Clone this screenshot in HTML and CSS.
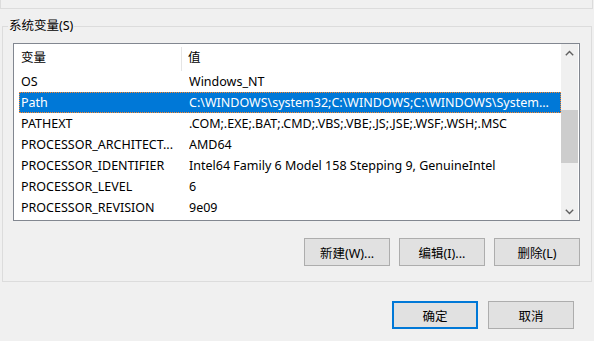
FILE: index.html
```html
<!DOCTYPE html>
<html lang="zh-CN">
<head>
<meta charset="utf-8">
<title>系统变量</title>
<link rel="stylesheet" href="styles.css">
</head>
<body>
<div class="prev"></div>
<div class="group">
  <span class="legend">系统变量(S)</span>
  <div class="list">
    <div class="rows">
      <div class="hdr"><div class="c1">变量</div><div class="c2">值</div></div>
      <div class="row"><div class="c1">OS</div><div class="c2">Windows_NT</div></div>
      <div class="row sel"><div class="c1">Path</div><div class="c2">C:\WINDOWS\system32;C:\WINDOWS;C:\WINDOWS\System...</div></div>
      <div class="row"><div class="c1">PATHEXT</div><div class="c2">.COM;.EXE;.BAT;.CMD;.VBS;.VBE;.JS;.JSE;.WSF;.WSH;.MSC</div></div>
      <div class="row"><div class="c1">PROCESSOR_ARCHITECT...</div><div class="c2">AMD64</div></div>
      <div class="row"><div class="c1">PROCESSOR_IDENTIFIER</div><div class="c2">Intel64 Family 6 Model 158 Stepping 9, GenuineIntel</div></div>
      <div class="row"><div class="c1">PROCESSOR_LEVEL</div><div class="c2">6</div></div>
      <div class="row"><div class="c1">PROCESSOR_REVISION</div><div class="c2">9e09</div></div>
    </div>
    <div class="sb">
      <div class="sb-btn"><svg width="9" height="6" viewBox="0 0 9 6"><path d="M0.8 5.2 L4.5 1.5 L8.2 5.2" fill="none" stroke="#606060" stroke-width="1.4"/></svg></div>
      <div class="track"><div class="thumb"></div></div>
      <div class="sb-btn"><svg width="9" height="6" viewBox="0 0 9 6"><path d="M0.8 0.8 L4.5 4.5 L8.2 0.8" fill="none" stroke="#606060" stroke-width="1.4"/></svg></div>
    </div>
  </div>
  <div class="btns">
    <div class="btn">新建(W)...</div>
    <div class="btn">编辑(I)...</div>
    <div class="btn">删除(L)</div>
  </div>
</div>
<div class="footer">
  <div class="btn primary">确定</div>
  <div class="btn">取消</div>
</div>
</body>
</html>
```
FILE: styles.css
```css
html, body {
  margin: 0;
  background: #f0f0f0;
  color: #000;
  font-family: "Noto Sans", "Noto Sans CJK SC", sans-serif;
  font-size: 12.5px;
}

.prev {
  height: 8px;
  margin-right: 1px;
  border: 1px solid #dcdcdc;
  border-top: 0;
}

.group {
  position: relative;
  margin: 17px 2px 0 2px;
  border: 1px solid #dcdcdc;
  padding: 16px 11px 15px 10px;
}

.legend {
  position: absolute;
  left: 5px;
  top: -9px;
  padding: 0 1px;
  line-height: 16px;
  background: #f0f0f0;
}

.list {
  display: flex;
  height: 178px;
  box-sizing: border-box;
  border: 1px solid #828790;
  background: #fff;
}

.rows {
  flex: 1;
  min-width: 0;
  padding-left: 5px;
}

.hdr {
  display: flex;
  height: 27px;
}

.hdr .c1 {
  width: 163px;
  box-sizing: border-box;
  padding-left: 2px;
  margin-top: 3px;
  line-height: 21px;
  border-right: 1px solid #e5e5e5;
}

.hdr .c2 {
  padding-left: 6px;
  margin-top: 3px;
  line-height: 21px;
}

.row {
  display: flex;
  height: 21px;
  line-height: 21px;
  white-space: nowrap;
}

.row .c1 {
  width: 170px;
  flex: none;
  box-sizing: border-box;
  padding-left: 2px;
  overflow: hidden;
}

.row .c2 {
  flex: 1;
  min-width: 0;
  overflow: hidden;
}

.row.sel {
  background: #0078d7;
  color: #fff;
  outline: 1px dotted #ff8728;
  outline-offset: -1px;
}

.sb {
  width: 17px;
  margin-right: 1px;
  background: #f0f0f0;
  display: flex;
  flex-direction: column;
}

.sb-btn {
  height: 17px;
  display: flex;
  align-items: center;
  justify-content: center;
}

.track {
  flex: 1;
  padding-top: 49px;
}

.thumb {
  height: 53px;
  background: #cdcdcd;
}

.btns {
  display: flex;
  justify-content: flex-end;
  gap: 9px;
  margin-top: 17px;
}

.btn {
  width: 86px;
  height: 28px;
  box-sizing: border-box;
  border: 1px solid #adadad;
  background: #e1e1e1;
  display: flex;
  align-items: center;
  justify-content: center;
}

.btn.primary {
  border: 2px solid #0078d7;
}

.footer {
  display: flex;
  justify-content: flex-end;
  gap: 10px;
  margin: 19px 20px 0 0;
}
```
